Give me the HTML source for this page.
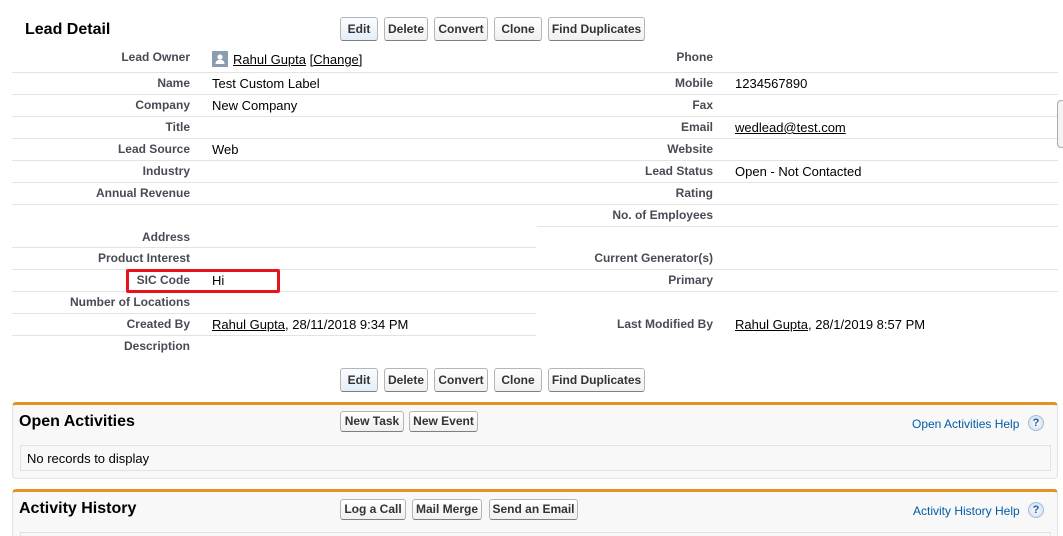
<!DOCTYPE html>
<html style="width:1063px;height:536px;overflow:hidden"><head><meta charset="utf-8"><style>
*{margin:0;padding:0;box-sizing:border-box}
body{width:1063px;height:536px;overflow:hidden;background:#fff;font-family:"Liberation Sans",Arial,sans-serif;position:relative;color:#000}
.a{position:absolute;white-space:nowrap}
.lbl{font-size:12px;font-weight:bold;color:#4a4a56;text-align:right}
.val{font-size:13px;color:#000}
.ln{position:absolute;height:1px;background:#e3e3e3}
.btn{position:absolute;height:24px;border:1px solid #b5b5b5;border-radius:3px;background:linear-gradient(#fff,#f0f0f0);font-size:12px;font-weight:bold;color:#333;text-align:center;line-height:22px;border-bottom-color:#7f7f7f}
.edit{background:linear-gradient(#fafdff,#e3eef9)}
u{text-decoration:underline}
.box{position:absolute;left:12px;width:1046px;background:#f8f8f8;border:1px solid #e0e3e5;border-top:3px solid #e39321;border-radius:4px}
.h{font-size:16px;font-weight:bold}
.help{font-size:12px;color:#015ba7}
.q{position:absolute;width:16px;height:16px;border-radius:50%;background:radial-gradient(#fff,#c9d9ec);border:1px solid #a6bcd6;color:#1b5ba8;font-size:11px;font-weight:bold;text-align:center;line-height:14px}
</style></head><body>
<div class="a" style="left:25px;top:21px;font-size:16px;font-weight:bold">Lead Detail</div>

<div class="btn edit" style="left:340px;top:17px;width:38px">Edit</div>
<div class="btn" style="left:384px;top:17px;width:44px">Delete</div>
<div class="btn" style="left:434px;top:17px;width:54px">Convert</div>
<div class="btn" style="left:494px;top:17px;width:48px">Clone</div>
<div class="btn" style="left:548px;top:17px;width:97px">Find Duplicates</div>

<div class="ln" style="left:12px;width:1046px;top:72px"></div>
<div class="ln" style="left:12px;width:1046px;top:94px"></div>
<div class="ln" style="left:12px;width:1046px;top:116px"></div>
<div class="ln" style="left:12px;width:1046px;top:138px"></div>
<div class="ln" style="left:12px;width:1046px;top:160px"></div>
<div class="ln" style="left:12px;width:1046px;top:182px"></div>
<div class="ln" style="left:12px;width:1046px;top:204px"></div>
<div class="ln" style="left:537px;width:521px;top:226px"></div>
<div class="ln" style="left:12px;width:524px;top:247px"></div>
<div class="ln" style="left:12px;width:1046px;top:269px"></div>
<div class="ln" style="left:12px;width:1046px;top:291px"></div>
<div class="ln" style="left:12px;width:524px;top:313px"></div>
<div class="ln" style="left:12px;width:524px;top:335px"></div>

<div class="a lbl" style="right:873px;top:50px">Lead Owner</div>
<div class="a lbl" style="right:873px;top:76px">Name</div>
<div class="a lbl" style="right:873px;top:98px">Company</div>
<div class="a lbl" style="right:873px;top:120px">Title</div>
<div class="a lbl" style="right:873px;top:142px">Lead Source</div>
<div class="a lbl" style="right:873px;top:164px">Industry</div>
<div class="a lbl" style="right:873px;top:186px">Annual Revenue</div>
<div class="a lbl" style="right:873px;top:230px">Address</div>
<div class="a lbl" style="right:873px;top:251px">Product Interest</div>
<div class="a lbl" style="right:873px;top:273px">SIC Code</div>
<div class="a lbl" style="right:873px;top:295px">Number of Locations</div>
<div class="a lbl" style="right:873px;top:317px">Created By</div>
<div class="a lbl" style="right:873px;top:339px">Description</div>

<div class="a" style="left:212px;top:51px;width:16px;height:16px;background:#8a9cb0"><svg width="16" height="16"><circle cx="8" cy="6" r="2.6" fill="#fff"/><path d="M3.5 13c0-3 2-4.3 4.5-4.3s4.5 1.3 4.5 4.3z" fill="#fff"/></svg></div>
<div class="a val" style="left:233px;top:52px"><u>Rahul Gupta</u> [<u>Change</u>]</div>
<div class="a val" style="left:212px;top:76px">Test Custom Label</div>
<div class="a val" style="left:212px;top:98px">New Company</div>
<div class="a val" style="left:212px;top:142px">Web</div>
<div class="a val" style="left:212px;top:273px">Hi</div>
<div class="a val" style="left:212px;top:317px"><u>Rahul Gupta</u>, 28/11/2018 9:34 PM</div>
<div class="a" style="left:126px;top:269px;width:154px;height:24px;border:3px solid #e8131c;border-radius:2px"></div>

<div class="a lbl" style="right:350px;top:50px">Phone</div>
<div class="a lbl" style="right:350px;top:76px">Mobile</div>
<div class="a lbl" style="right:350px;top:98px">Fax</div>
<div class="a lbl" style="right:350px;top:120px">Email</div>
<div class="a lbl" style="right:350px;top:142px">Website</div>
<div class="a lbl" style="right:350px;top:164px">Lead Status</div>
<div class="a lbl" style="right:350px;top:186px">Rating</div>
<div class="a lbl" style="right:350px;top:208px">No. of Employees</div>
<div class="a lbl" style="right:350px;top:251px">Current Generator(s)</div>
<div class="a lbl" style="right:350px;top:273px">Primary</div>
<div class="a lbl" style="right:350px;top:317px">Last Modified By</div>

<div class="a val" style="left:735px;top:76px">1234567890</div>
<div class="a val" style="left:735px;top:120px"><u>wedlead@test.com</u></div>
<div class="a val" style="left:735px;top:164px">Open - Not Contacted</div>
<div class="a val" style="left:735px;top:317px"><u>Rahul Gupta</u>, 28/1/2019 8:57 PM</div>

<div class="a" style="left:1057px;top:100px;width:8px;height:48px;border:1px solid #aaa;border-radius:4px;background:#f4f4f4"></div>

<div class="btn edit" style="left:340px;top:368px;width:38px">Edit</div>
<div class="btn" style="left:384px;top:368px;width:44px">Delete</div>
<div class="btn" style="left:434px;top:368px;width:54px">Convert</div>
<div class="btn" style="left:494px;top:368px;width:48px">Clone</div>
<div class="btn" style="left:548px;top:368px;width:97px">Find Duplicates</div>

<div class="box" style="top:402px;height:77px"></div>
<div class="a h" style="left:19px;top:413px">Open Activities</div>
<div class="btn" style="left:340px;top:411px;width:64px;height:21px;line-height:19px">New Task</div>
<div class="btn" style="left:409px;top:411px;width:69px;height:21px;line-height:19px">New Event</div>
<div class="a help" style="left:912px;top:417px">Open Activities Help</div>
<div class="q" style="left:1028px;top:415px">?</div>
<div class="a" style="left:20px;top:445px;width:1031px;height:26px;background:#f8f8f8;border:1px solid #e0e3e5"></div>
<div class="a val" style="left:27px;top:451px;font-size:13px">No records to display</div>

<div class="box" style="top:489px;height:60px"></div>
<div class="a h" style="left:19px;top:500px">Activity History</div>
<div class="btn" style="left:340px;top:499px;width:66px;height:21px;line-height:19px">Log a Call</div>
<div class="btn" style="left:412px;top:499px;width:70px;height:21px;line-height:19px">Mail Merge</div>
<div class="btn" style="left:489px;top:499px;width:89px;height:21px;line-height:19px">Send an Email</div>
<div class="a help" style="left:913px;top:504px">Activity History Help</div>
<div class="q" style="left:1028px;top:502px">?</div>
<div class="a" style="left:20px;top:532px;width:1031px;height:26px;background:#f8f8f8;border:1px solid #e0e3e5"></div>
</body></html>
